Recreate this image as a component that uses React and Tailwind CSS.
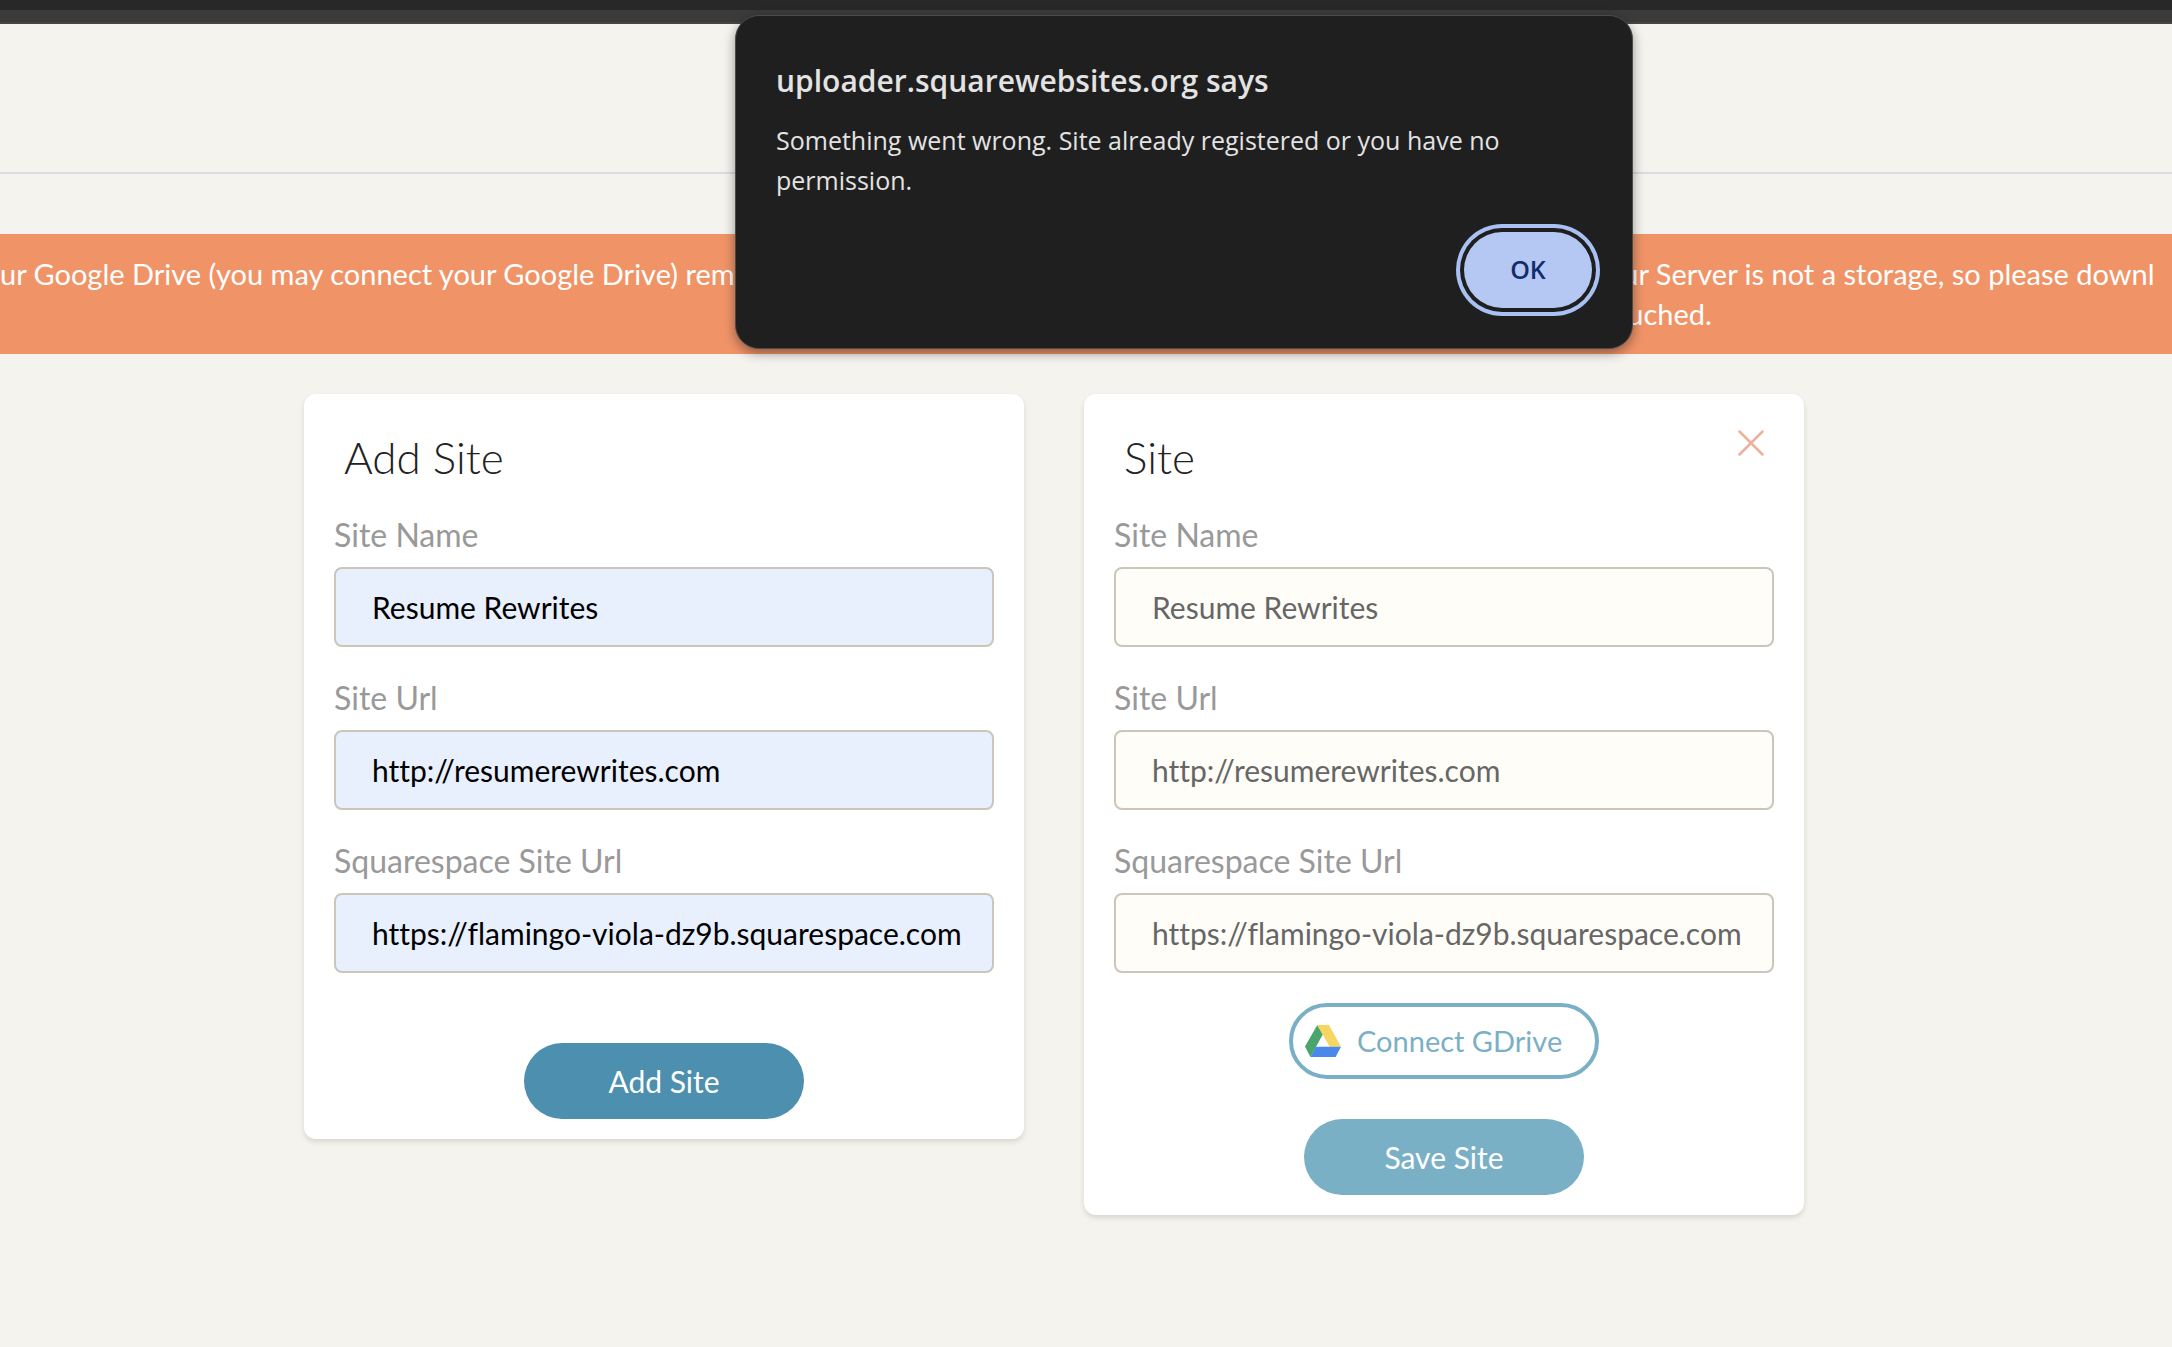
import { useState } from "react";

const DriveIcon = () => (
  <svg width="36" height="32" viewBox="0 0 36 32" aria-hidden="true">
    <path d="M12.3 0 17.8 9.6 5.4 32 0 21.6Z" fill="#4aa56d" />
    <path d="M12.3 0H24L36 21.8H24.6Z" fill="#f7d563" />
    <path d="M10.8 21.8H36L30.6 32H5.4Z" fill="#4a88ec" />
  </svg>
);

const CloseIcon = () => (
  <svg width="26" height="26" viewBox="0 0 26 26" aria-hidden="true">
    <path
      d="M1.5 1.5 24.5 24.5M24.5 1.5 1.5 24.5"
      stroke="#edb09b"
      strokeWidth="2.5"
      strokeLinecap="round"
    />
  </svg>
);

const Field = ({ id, label, value, onChange, autofilled }) => (
  <div className="flex flex-col gap-3">
    <label htmlFor={id} className="text-[32px] leading-10 text-[#999]">
      {label}
    </label>
    <input
      id={id}
      type="text"
      value={value}
      onChange={(e) => onChange(e.target.value)}
      className={`h-20 w-full rounded-lg border-2 border-[#ccc5b9] pr-4 pl-9 text-[30px] outline-none ${
        autofilled ? "bg-[#e8effd] text-black" : "bg-[#fffdf8] text-[#666]"
      }`}
    />
  </div>
);

const SiteCard = ({ prefix, title, autofilled, onClose, children }) => {
  const [site, setSite] = useState({
    name: "Resume Rewrites",
    url: "http://resumerewrites.com",
    squarespace: "https://flamingo-viola-dz9b.squarespace.com",
  });

  const update = (key) => (value) => setSite({ ...site, [key]: value });

  return (
    <section className="flex-1 rounded-xl bg-white px-[30px] pt-9 pb-5 shadow-[0_3px_5px_rgba(90,75,50,0.16)]">
      <div className="mb-[31px] flex items-start justify-between px-[10px]">
        <h2 className="text-[44px] leading-[54px] font-light text-[#222]">{title}</h2>
        {onClose && (
          <button type="button" aria-label="Close" onClick={onClose}>
            <CloseIcon />
          </button>
        )}
      </div>

      <form onSubmit={(e) => e.preventDefault()}>
        <div className="flex flex-col gap-[31px]">
          <Field
            id={`${prefix}-name`}
            label="Site Name"
            value={site.name}
            onChange={update("name")}
            autofilled={autofilled}
          />
          <Field
            id={`${prefix}-url`}
            label="Site Url"
            value={site.url}
            onChange={update("url")}
            autofilled={autofilled}
          />
          <Field
            id={`${prefix}-squarespace`}
            label="Squarespace Site Url"
            value={site.squarespace}
            onChange={update("squarespace")}
            autofilled={autofilled}
          />
        </div>
        {children}
      </form>
    </section>
  );
};

const AlertDialog = ({ onClose }) => (
  <div className="absolute inset-x-0 top-[15px] z-10 flex justify-center pl-[196px]">
    <div
      role="alertdialog"
      aria-labelledby="alert-title"
      aria-describedby="alert-message"
      className="flex w-[898px] flex-col rounded-3xl border border-[#4a4c4c] bg-[#1f1f1f] px-10 pt-[45px] pb-10 font-['Open_Sans','Noto_Sans',sans-serif] text-[#e3e3e3] shadow-[0_4px_12px_rgba(0,0,0,0.4)]"
    >
      <h1 id="alert-title" className="text-[30px] leading-10 font-semibold">
        uploader.squarewebsites.org says
      </h1>
      <p id="alert-message" className="mt-[19px] text-[25px] leading-10">
        Something went wrong. Site already registered or you have no permission.
      </p>
      <button
        type="button"
        onClick={onClose}
        className="mt-8 h-[76px] w-32 self-end rounded-full bg-[#b4c8f3] text-[25px] font-semibold text-[#122c6d] ring-4 ring-[#a8c0f2] ring-offset-4 ring-offset-[#1f1f1f] outline-none"
      >
        OK
      </button>
    </div>
  </div>
);

export default function App() {
  const [alertOpen, setAlertOpen] = useState(true);
  const [siteOpen, setSiteOpen] = useState(true);

  return (
    <div className="relative min-h-screen overflow-hidden bg-[#f4f3ee] font-['Lato','Open_Sans',sans-serif] [font-variant-ligatures:none]">
      {/* Browser toolbar edge */}
      <div className="h-[10px] bg-[#282828]" />
      <div className="h-[14px] border-b-2 border-[#464646] bg-[#3b3b3b]" />

      <header className="h-[150px] border-b-2 border-[#dcdbdf]" />

      {/* Storage notice, running the full width of the window */}
      <div className="mt-[60px] bg-[#f09468] py-5 text-[29px] leading-10 text-white">
        <p className="flex whitespace-nowrap">
          <span className="w-[74%] shrink-0 pr-2">
            ur Google Drive (you may connect your Google Drive) remains
          </span>
          <span className="-ml-2">Our Server is not a storage, so please downl</span>
        </p>
        <p className="w-[79%] pr-1 text-right">untouched.</p>
      </div>

      <main className="mt-10 mr-16 flex justify-center">
        <div className="flex w-full max-w-[1500px] items-start gap-[60px]">
          <SiteCard prefix="add" title="Add Site" autofilled>
            <div className="mt-[70px] flex justify-center">
              <button
                type="submit"
                className="h-[76px] w-[280px] rounded-full bg-[#4d8faf] text-[30px] text-white"
              >
                Add Site
              </button>
            </div>
          </SiteCard>

          {siteOpen && (
            <SiteCard prefix="edit" title="Site" onClose={() => setSiteOpen(false)}>
              <div className="mt-[30px] flex flex-col items-center gap-10">
                <button
                  type="button"
                  className="flex h-[76px] w-[310px] items-center gap-4 rounded-full border-4 border-[#7ab0c5] bg-white pl-3 text-[29px] text-[#7ab0c5]"
                >
                  <DriveIcon />
                  Connect GDrive
                </button>
                <button
                  type="submit"
                  className="h-[76px] w-[280px] rounded-full bg-[#7ab0c5] text-[30px] text-white"
                >
                  Save Site
                </button>
              </div>
            </SiteCard>
          )}
        </div>
      </main>

      {alertOpen && <AlertDialog onClose={() => setAlertOpen(false)} />}
    </div>
  );
}
